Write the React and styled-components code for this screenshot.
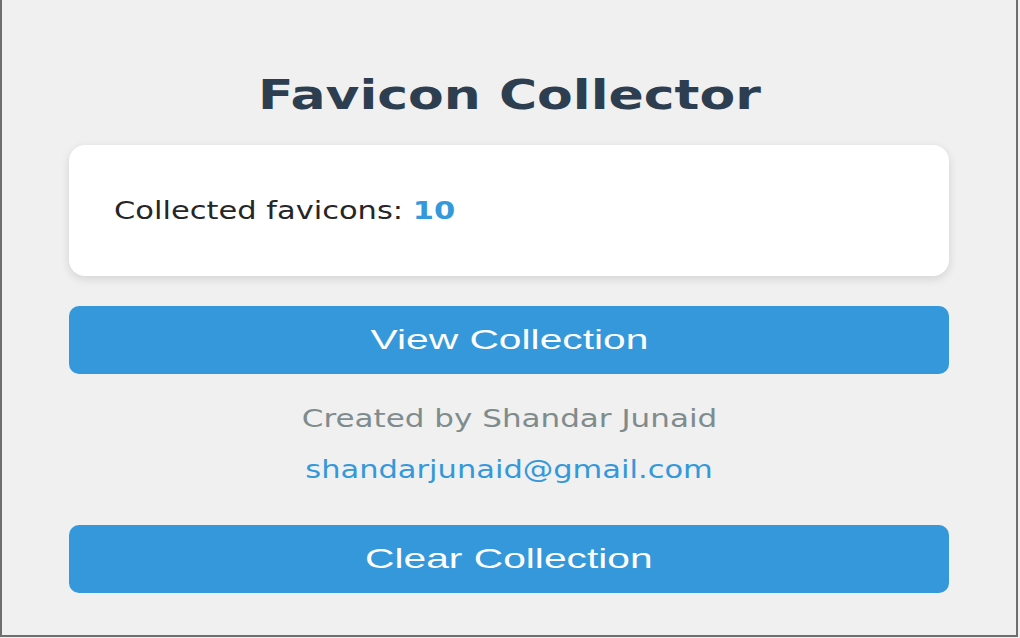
import React from 'react';
import styled, { createGlobalStyle } from 'styled-components';

const GlobalStyle = createGlobalStyle`
  html, body {
    margin: 0;
    padding: 0;
    background: #f0f0f0;
  }
  body {
    font-family: "DejaVu Sans", Verdana, sans-serif;
  }
`;

const Frame = styled.div`
  box-sizing: border-box;
  width: 1018px;
  height: 637px;
  background: #f0f0f0;
  border-left: 2px solid #6e6e6e;
  border-right: 2px solid #6e6e6e;
  border-bottom: 2px solid #6e6e6e;
  display: flex;
  flex-direction: column;
  align-items: center;
  padding: 0 66px;
`;

const Wide = styled.span`
  display: inline-block;
  white-space: nowrap;
  transform: scaleX(${p => p.$sx});
  transform-origin: ${p => (p.$left ? 'left center' : 'center center')};
`;

const Title = styled.h1`
  margin: 67px 0 0;
  font-size: 40px;
  line-height: 56px;
  font-weight: 700;
  color: #2c3e50;
  text-align: center;
`;

const Card = styled.div`
  box-sizing: border-box;
  width: 880px;
  height: 131px;
  margin-top: 22px;
  background: #ffffff;
  border-radius: 16px;
  box-shadow: 0 3px 10px rgba(0, 0, 0, 0.12);
  display: flex;
  align-items: center;
  padding: 0 45px;
  font-size: 25px;
  color: #262626;
`;

const Count = styled.strong`
  font-weight: 700;
  color: #3498db;
`;

const Button = styled.button`
  box-sizing: border-box;
  width: 880px;
  height: 68px;
  margin-top: ${p => p.$top}px;
  border: none;
  border-radius: 10px;
  background: #3498db;
  color: #ffffff;
  font-family: "Liberation Sans", Arial, sans-serif;
  font-size: 28px;
  cursor: pointer;
`;

const Credit = styled.p`
  margin: 29px 0 0;
  font-size: 25px;
  line-height: 32px;
  color: #7f8c8d;
`;

const Email = styled.a`
  margin-top: 19px;
  font-size: 25px;
  line-height: 32px;
  color: #3498db;
  text-decoration: none;
`;

const App = () => (
  <>
    <GlobalStyle />
    <Frame>
      <Title>
        <Wide $sx={1.3}>Favicon Collector</Wide>
      </Title>
      <Card>
        <Wide $sx={1.22} $left>
          Collected favicons: <Count>10</Count>
        </Wide>
      </Card>
      <Button $top={30}>
        <Wide $sx={1.455}>View Collection</Wide>
      </Button>
      <Credit>
        <Wide $sx={1.24}>Created by Shandar Junaid</Wide>
      </Credit>
      <Email href="mailto:shandarjunaid@gmail.com">
        <Wide $sx={1.22}>shandarjunaid@gmail.com</Wide>
      </Email>
      <Button $top={39}>
        <Wide $sx={1.455}>Clear Collection</Wide>
      </Button>
    </Frame>
  </>
);

export default App;
